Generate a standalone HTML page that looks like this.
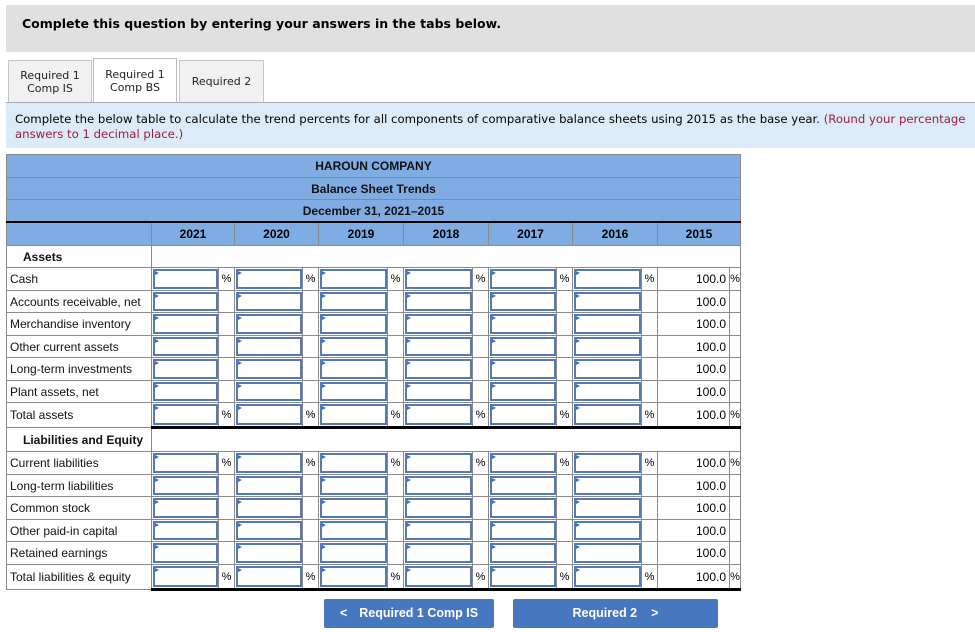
<!DOCTYPE html>
<html><head><meta charset="utf-8"><style>
body{margin:0;background:#fff;font-family:"Liberation Sans",Arial,sans-serif;width:975px;height:632px;position:relative;overflow:hidden}
.top{position:absolute;left:6px;top:5px;width:969px;height:47px;background:#e0e0e0;font-family:"DejaVu Sans",Verdana,sans-serif;font-weight:bold;font-size:12.5px;line-height:38px;text-indent:16px;color:#000}
.tab{position:absolute;top:60px;height:41px;background:#f1f1f1;border:1px solid #c6c6c6;border-bottom:none;font-family:"DejaVu Sans",Verdana,sans-serif;font-size:11px;text-align:center;display:flex;align-items:center;justify-content:center;line-height:13px;color:#222}
.tab.act{background:#fff;top:58px;height:44px;border-color:#bbb}
.instr{position:absolute;left:6px;top:102px;width:969px;height:46px;background:#dcebf9;border-top:1px solid #aaa;font-family:"DejaVu Sans",Verdana,sans-serif;font-size:11.7px;line-height:15px;color:#000;padding:9px 0 0 9px;box-sizing:border-box}
.instr span{color:#9b1c3c}
table{position:absolute;left:6px;top:154px;border-collapse:collapse;table-layout:fixed;font-size:12px}
td{border:1px solid #8a8a8a;padding:0;height:21px;overflow:hidden;white-space:nowrap;line-height:14px}
.h td{background:#80ace4;text-align:center;color:#111;font-weight:bold;font-size:12px}
.h.t td{height:22px}
.blk td{border-bottom:2px solid #000}
.yr td{background:#80ace4;text-align:center;font-weight:bold;height:22px}
.lab{padding-left:3px;color:#111}
.sec{font-weight:bold;padding-left:16px}
td.in{padding:1px 0 1px 1px;height:19px}
tr.o td.in{height:20px}
.in div{height:15px;border:2px solid #5479b5;position:relative;box-sizing:content-box}
tr.o .in div{height:16px}
.in div:before{content:"";position:absolute;left:0;top:0;border-left:4px solid #3b6fc4;border-top:2px solid transparent;border-bottom:2px solid transparent}
.p{text-align:center;font-size:11px}
.v{text-align:right;padding-right:3px}
.tot td{border-bottom:3px solid #000;height:21px}
.tot td.in{height:21px}
.tot .in div{height:17px}
tr.lh td{height:22px}
.btn{position:absolute;top:599px;height:29px;background:#4677bf;border-radius:2px;color:#fff;font-weight:bold;font-size:12.5px;text-align:center;line-height:29px}
</style></head><body>
<div class="top">Complete this question by entering your answers in the tabs below.</div>
<div class="tab" style="left:8px;width:82px">Required 1<br>Comp IS</div>
<div class="tab act" style="left:93px;width:82px">Required 1<br>Comp BS</div>
<div class="tab" style="left:179px;width:83px">Required 2</div>
<div class="instr">Complete the below table to calculate the trend percents for all components of comparative balance sheets using 2015 as the base year. <span>(Round your percentage answers to 1 decimal place.)</span></div>

<table>
<colgroup><col style="width:145px">
<col style="width:67px"><col style="width:16px">
<col style="width:68px"><col style="width:16px">
<col style="width:69px"><col style="width:16px">
<col style="width:69px"><col style="width:16px">
<col style="width:68px"><col style="width:16px">
<col style="width:69px"><col style="width:16px">
<col style="width:72px"><col style="width:11px"></colgroup>
<tr class="h t"><td colspan="15">HAROUN COMPANY</td></tr>
<tr class="h"><td colspan="15">Balance Sheet Trends</td></tr>
<tr class="h blk"><td colspan="15">December 31, 2021–2015</td></tr>
<tr class="yr"><td></td><td colspan="2">2021</td><td colspan="2">2020</td><td colspan="2">2019</td><td colspan="2">2018</td><td colspan="2">2017</td><td colspan="2">2016</td><td colspan="2">2015</td></tr>
<tr><td class="lab sec">Assets</td><td colspan="14"></td></tr>
<tr class="o"><td class="lab">Cash</td><td class="in"><div></div></td><td class="p">%</td><td class="in"><div></div></td><td class="p">%</td><td class="in"><div></div></td><td class="p">%</td><td class="in"><div></div></td><td class="p">%</td><td class="in"><div></div></td><td class="p">%</td><td class="in"><div></div></td><td class="p">%</td><td class="v">100.0</td><td class="p">%</td></tr>
<tr><td class="lab">Accounts receivable, net</td><td class="in"><div></div></td><td></td><td class="in"><div></div></td><td></td><td class="in"><div></div></td><td></td><td class="in"><div></div></td><td></td><td class="in"><div></div></td><td></td><td class="in"><div></div></td><td></td><td class="v">100.0</td><td></td></tr>
<tr class="o"><td class="lab">Merchandise inventory</td><td class="in"><div></div></td><td></td><td class="in"><div></div></td><td></td><td class="in"><div></div></td><td></td><td class="in"><div></div></td><td></td><td class="in"><div></div></td><td></td><td class="in"><div></div></td><td></td><td class="v">100.0</td><td></td></tr>
<tr><td class="lab">Other current assets</td><td class="in"><div></div></td><td></td><td class="in"><div></div></td><td></td><td class="in"><div></div></td><td></td><td class="in"><div></div></td><td></td><td class="in"><div></div></td><td></td><td class="in"><div></div></td><td></td><td class="v">100.0</td><td></td></tr>
<tr class="o"><td class="lab">Long-term investments</td><td class="in"><div></div></td><td></td><td class="in"><div></div></td><td></td><td class="in"><div></div></td><td></td><td class="in"><div></div></td><td></td><td class="in"><div></div></td><td></td><td class="in"><div></div></td><td></td><td class="v">100.0</td><td></td></tr>
<tr><td class="lab">Plant assets, net</td><td class="in"><div></div></td><td></td><td class="in"><div></div></td><td></td><td class="in"><div></div></td><td></td><td class="in"><div></div></td><td></td><td class="in"><div></div></td><td></td><td class="in"><div></div></td><td></td><td class="v">100.0</td><td></td></tr>
<tr class="tot"><td class="lab" style="border-bottom:1px solid #8a8a8a">Total assets</td><td class="in"><div></div></td><td class="p">%</td><td class="in"><div></div></td><td class="p">%</td><td class="in"><div></div></td><td class="p">%</td><td class="in"><div></div></td><td class="p">%</td><td class="in"><div></div></td><td class="p">%</td><td class="in"><div></div></td><td class="p">%</td><td class="v">100.0</td><td class="p">%</td></tr>
<tr class="lh"><td class="lab sec">Liabilities and Equity</td><td colspan="14"></td></tr>
<tr class="o"><td class="lab">Current liabilities</td><td class="in"><div></div></td><td class="p">%</td><td class="in"><div></div></td><td class="p">%</td><td class="in"><div></div></td><td class="p">%</td><td class="in"><div></div></td><td class="p">%</td><td class="in"><div></div></td><td class="p">%</td><td class="in"><div></div></td><td class="p">%</td><td class="v">100.0</td><td class="p">%</td></tr>
<tr><td class="lab">Long-term liabilities</td><td class="in"><div></div></td><td></td><td class="in"><div></div></td><td></td><td class="in"><div></div></td><td></td><td class="in"><div></div></td><td></td><td class="in"><div></div></td><td></td><td class="in"><div></div></td><td></td><td class="v">100.0</td><td></td></tr>
<tr class="o"><td class="lab">Common stock</td><td class="in"><div></div></td><td></td><td class="in"><div></div></td><td></td><td class="in"><div></div></td><td></td><td class="in"><div></div></td><td></td><td class="in"><div></div></td><td></td><td class="in"><div></div></td><td></td><td class="v">100.0</td><td></td></tr>
<tr><td class="lab">Other paid-in capital</td><td class="in"><div></div></td><td></td><td class="in"><div></div></td><td></td><td class="in"><div></div></td><td></td><td class="in"><div></div></td><td></td><td class="in"><div></div></td><td></td><td class="in"><div></div></td><td></td><td class="v">100.0</td><td></td></tr>
<tr class="o"><td class="lab">Retained earnings</td><td class="in"><div></div></td><td></td><td class="in"><div></div></td><td></td><td class="in"><div></div></td><td></td><td class="in"><div></div></td><td></td><td class="in"><div></div></td><td></td><td class="in"><div></div></td><td></td><td class="v">100.0</td><td></td></tr>
<tr class="tot"><td class="lab" style="border-bottom:1px solid #8a8a8a">Total liabilities &amp; equity</td><td class="in"><div></div></td><td class="p">%</td><td class="in"><div></div></td><td class="p">%</td><td class="in"><div></div></td><td class="p">%</td><td class="in"><div></div></td><td class="p">%</td><td class="in"><div></div></td><td class="p">%</td><td class="in"><div></div></td><td class="p">%</td><td class="v">100.0</td><td class="p">%</td></tr>
</table>

<div class="btn" style="left:324px;width:170px"><span style="margin-right:12px">&lt;</span>Required 1 Comp IS</div>
<div class="btn" style="left:513px;width:205px">Required 2<span style="margin-left:14px">&gt;</span></div>
</body></html>
